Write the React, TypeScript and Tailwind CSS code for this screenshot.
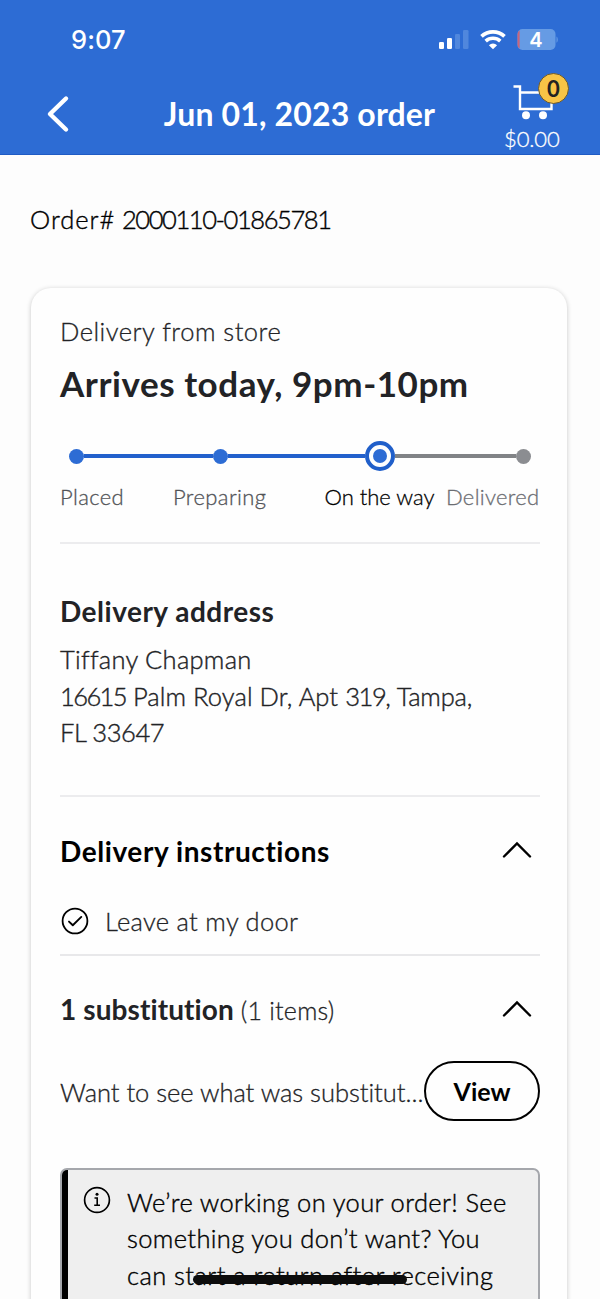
import type { ReactNode } from 'react'

const steps = [
  { label: 'Placed', className: 'w-[113px] text-[#515357] tracking-[0.35px]' },
  { label: 'Preparing', className: 'w-[151.5px] text-[#515357] tracking-[0.4px]' },
  { label: 'On the way', className: 'w-[121.5px] text-black' },
  { label: 'Delivered', className: 'text-[#6b6d72] tracking-[0.3px]' },
]

function StatusIcons() {
  return (
    <svg width="120" height="24" viewBox="0 0 120 24" fill="none">
      <rect x="1" y="14" width="5" height="7" rx="1.3" fill="#fff" />
      <rect x="9" y="10" width="5" height="11" rx="1.3" fill="#fff" />
      <rect x="17" y="6" width="5" height="15" rx="1.3" fill="#5087dd" />
      <rect x="25" y="2" width="5.5" height="19" rx="1.3" fill="#5087dd" />
      <path d="M43.5 8.3A17 17 0 0 1 66.5 8.3" stroke="#fff" strokeWidth="3.8" />
      <path d="M47.7 13.1A10.8 10.8 0 0 1 62.3 13.1" stroke="#fff" strokeWidth="3.6" />
      <path d="M55 21.3L50.9 17.2A6 6 0 0 1 59.1 17.2Z" fill="#fff" />
      <rect x="79.5" y="1" width="38" height="21" rx="5" fill="#669be4" />
      <path d="M81.6 2.2A5 5 0 0 0 79.5 6V17A5 5 0 0 0 81.6 20.8Z" fill="#c8647c" />
      <path d="M118.5 8.6V14.8C120.2 13.8 120.2 9.6 118.5 8.6Z" fill="#669be4" />
    </svg>
  )
}

function CartIcon() {
  return (
    <svg width="42" height="37" viewBox="0 0 42 37" fill="none">
      <path d="M.5 2.5H7V25H38.5V8.5H7" stroke="#fff" strokeWidth="2.4" />
      <circle cx="13" cy="31.3" r="4" fill="#fff" />
      <circle cx="30" cy="31.3" r="4" fill="#fff" />
    </svg>
  )
}

function Chevron() {
  return (
    <svg width="30" height="18" viewBox="0 0 30 18" fill="none" className="mr-2 mb-0.5">
      <path d="M2 15.5L15 2.5L28 15.5" stroke="#000" strokeWidth="2.4" strokeLinecap="round" />
    </svg>
  )
}

function CheckIcon() {
  return (
    <svg width="28" height="28" viewBox="0 0 28 28" fill="none" stroke="#000" className="ml-px">
      <circle cx="14" cy="14" r="12.4" strokeWidth="1.8" />
      <path d="M8 14.6L11.8 18.3L20.3 9.9" strokeWidth="1.9" strokeLinecap="round" strokeLinejoin="round" />
    </svg>
  )
}

function InfoIcon() {
  return (
    <svg width="28" height="28" viewBox="0 0 28 28" fill="none" stroke="#000" className="mt-0.5 shrink-0">
      <circle cx="14" cy="14" r="12.4" strokeWidth="1.7" />
      <path d="M11.5 12H14.2V19M11.2 19.2H17" strokeWidth="1.6" />
      <circle cx="14" cy="8.3" r="1.5" fill="#000" stroke="none" />
    </svg>
  )
}

function SectionTitle({ children }: { children: ReactNode }) {
  return (
    <div className="flex items-center justify-between h-9">
      <h2 className="text-[28px] leading-9 font-bold whitespace-nowrap">{children}</h2>
      <Chevron />
    </div>
  )
}

export default function App() {
  return (
    <div className="relative w-[600px] h-[1299px] overflow-hidden bg-[#fdfdfd] font-['Lato',sans-serif] text-[#222326]">
      {/* Header */}
      <header className="h-[155px] bg-[#2d6cd4] border-b border-[#1f5bc4] text-white">
        <div className="flex items-center justify-between pt-7 pl-[71px] pr-[42px]">
          <span className="font-['Inter',sans-serif] text-[25.5px] leading-6 font-medium tracking-[0.1px]">9:07</span>
          <div className="relative">
            <StatusIcons />
            <span className="absolute left-[91px] top-0 w-[14px] text-center font-['Inter',sans-serif] text-[20px] leading-6 font-semibold">4</span>
          </div>
        </div>
        <div className="flex items-start justify-between pl-[46px] pr-[31px] pt-7">
          <svg width="24" height="38" viewBox="0 0 24 38" fill="none" className="mt-[15px]">
            <path d="M20 3.5L4 19L20 34.5" stroke="#fff" strokeWidth="4.4" strokeLinecap="round" strokeLinejoin="round" />
          </svg>
          <h1 className="mt-4 pl-6 text-[32px] leading-9 font-bold tracking-[0.15px]">Jun 01, 2023 order</h1>
          <div className="relative w-[64px] pt-1">
            <div className="pl-[8px]"><CartIcon /></div>
            <span className="absolute left-[33px] top-[-7px] size-[31px] rounded-full bg-[#f8c446] border border-[#6d5a2c] text-center text-[22px] leading-[30px] font-bold text-[#222]">0</span>
            <p className="mt-1.5 -ml-px text-[22px] leading-6 font-light tracking-[-0.1px] [-webkit-text-stroke:0.3px]">$0.00</p>
          </div>
        </div>
      </header>

      <p className="mt-[46px] ml-[30px] flex gap-2 text-[25.5px] leading-9 text-black font-light [-webkit-text-stroke:0.4px]">
        <span className="w-[84px] tracking-[1px]">Order#</span>
        <span className="tracking-[-1.42px]">2000110-01865781</span>
      </p>

      {/* Order card */}
      <main className="mt-[51px] ml-[31px] w-[536px] h-[1100px] rounded-[20px] bg-[#fefefe] pl-[29px] pr-[27px] pt-[25px] shadow-[0_1px_5px_rgba(0,0,0,0.22)]">
        <p className="text-[25.5px] leading-9 font-light tracking-[0.5px] [-webkit-text-stroke:0.3px]">Delivery from store</p>
        <p className="mt-[12px] text-[35px] leading-[44px] font-bold tracking-[0.55px] whitespace-nowrap">Arrives today, 9pm-10pm</p>

        {/* Progress */}
        <div className="mt-[36px] flex items-center h-[30px] px-[9px]">
          <span className="size-[15px] rounded-full bg-[#2d6cd4]" />
          <span className="h-1 flex-1 bg-[#2260cc]" />
          <span className="size-[15px] rounded-full bg-[#2d6cd4]" />
          <span className="h-1 w-[137px] bg-[#2260cc]" />
          <span className="flex size-[30px] items-center justify-center rounded-full border-4 border-[#205fca]">
            <span className="size-[14px] rounded-full bg-[#2d6cd4]" />
          </span>
          <span className="h-1 w-[121px] bg-[#818386]" />
          <span className="size-[15px] rounded-full bg-[#8b8d91]" />
        </div>
        <div className="mt-[10px] flex text-[22px] leading-8 font-light whitespace-nowrap [-webkit-text-stroke:0.3px]">
          {steps.map(({ label, className }) => (
            <span key={label} className={className}>{label}</span>
          ))}
        </div>

        {/* Address */}
        <section className="mt-[29px] border-t-2 border-[#ececee] pt-[49px]">
          <h2 className="text-[28px] leading-9 font-bold tracking-[0.5px]">Delivery address</h2>
          <address className="mt-[12px] text-[25.5px] leading-[36.5px] font-light not-italic whitespace-nowrap [-webkit-text-stroke:0.4px]">
            <span className="tracking-[0.28px]">Tiffany Chapman</span>
            <br />
            <span className="tracking-[-1.6px]">16615</span>
            <span className="tracking-[0.08px]"> Palm Royal Dr, Apt </span>
            <span className="tracking-[-1.4px]">319</span>
            <span className="tracking-[-0.2px]">, Tampa,</span>
            <br />
            <span className="tracking-[-0.4px]">FL 33647</span>
          </address>
        </section>

        {/* Instructions */}
        <section className="mt-[44px] border-t-2 border-[#ececee] pt-[36px] text-black">
          <SectionTitle>
            <span className="tracking-[0.58px]">Delivery instructions</span>
          </SectionTitle>
          <div className="mt-[34px] flex items-center gap-4">
            <CheckIcon />
            <p className="text-[25.5px] leading-9 font-light tracking-[0.3px] text-[#222326] [-webkit-text-stroke:0.3px]">Leave at my door</p>
          </div>
        </section>

        {/* Substitution */}
        <section className="mt-[15px] border-t-2 border-[#e8e8ea] pt-[36px]">
          <SectionTitle>
            <span className="tracking-[0.1px] [font-variant-ligatures:none]">1 substitution </span>
            <span className="text-[25px] font-light tracking-[0.25px] [-webkit-text-stroke:0.3px]">(1 items)</span>
          </SectionTitle>
          <div className="mt-[33px] flex items-center justify-between">
            <p className="pt-0.5 text-[25.5px] leading-9 font-light tracking-[-0.02px] whitespace-nowrap [-webkit-text-stroke:0.3px]">Want to see what was substitut...</p>
            <button className="h-[60px] w-[116px] shrink-0 rounded-full border-2 border-black pt-0.5 text-[25px] font-bold text-black">View</button>
          </div>
        </section>

        {/* Alert */}
        <div className="mt-[47px] h-[160px] overflow-hidden rounded-[7px] border-2 border-[#a5a7ac] bg-[#efefef]">
          <div className="flex h-full border-l-[6px] border-black pl-[15px] pt-[14px]">
            <InfoIcon />
            <p className="ml-4 text-[25.5px] leading-[36.5px] font-light tracking-[0.36px] text-black whitespace-nowrap [-webkit-text-stroke:0.4px]">
              We’re working on your order! See
              <br />
              something you don’t want? You
              <br />
              <span className="tracking-[0.44px]">can start a return after receiving</span>
            </p>
          </div>
        </div>
      </main>

      {/* Home indicator */}
      <div className="absolute left-[193px] top-[1275px] h-[9px] w-[214px] rounded-full bg-[#0c0c0c]" />
    </div>
  )
}
